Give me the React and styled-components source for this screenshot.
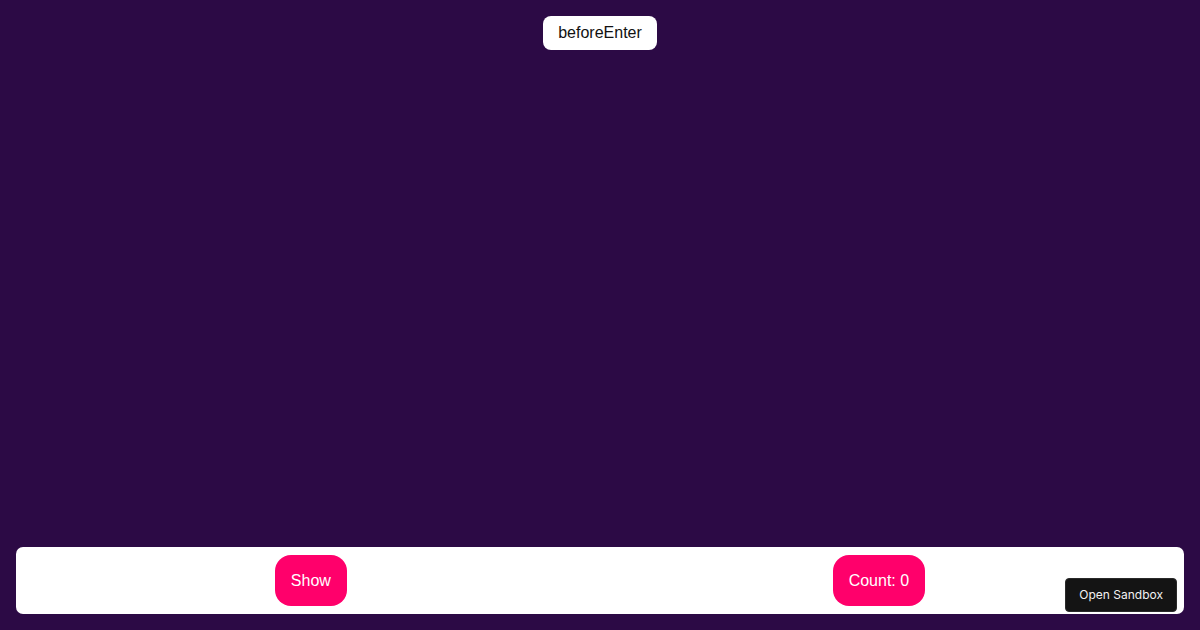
import styled, { createGlobalStyle } from "styled-components"

const GlobalStyle = createGlobalStyle`
  html, body {
    margin: 0;
    padding: 0;
    background: #2c0a45;
    font-family: "Liberation Sans", Arial, sans-serif;
  }
  * { box-sizing: border-box; }
`

const Page = styled.div`
  height: 100vh;
  display: flex;
  flex-direction: column;
  align-items: center;
  padding: 16px;
`

const Status = styled.div`
  background: #fff;
  color: #111;
  font-size: 16px;
  line-height: 18px;
  padding: 8px 15.5px;
  border-radius: 8px;
`

const Panel = styled.div`
  margin-top: auto;
  width: 100%;
  background: #fff;
  border-radius: 7px;
  padding: 8px 16px;
  display: flex;
  justify-content: space-around;
  align-items: center;
`

const Button = styled.button`
  border: 0;
  background: #ff006b;
  color: #fff;
  font-family: inherit;
  font-size: 16px;
  line-height: 19px;
  padding: 16px;
  border-radius: 16px;
  cursor: pointer;
`

const SandboxLink = styled.a`
  position: fixed;
  right: 23px;
  bottom: 18px;
  background: #141414;
  color: #f2f2f2;
  font-family: Inter, "Noto Sans", sans-serif;
  font-size: 12px;
  line-height: 16px;
  padding: 8px 13px;
  border-radius: 4px;
  border: 1px solid #2a2a2a;
  text-decoration: none;
`

export default function App() {
  return (
    <>
      <GlobalStyle />
      <Page>
        <Status>beforeEnter</Status>
        <Panel>
          <Button>Show</Button>
          <Button>Count: 0</Button>
        </Panel>
      </Page>
      <SandboxLink href="#">Open Sandbox</SandboxLink>
    </>
  )
}
